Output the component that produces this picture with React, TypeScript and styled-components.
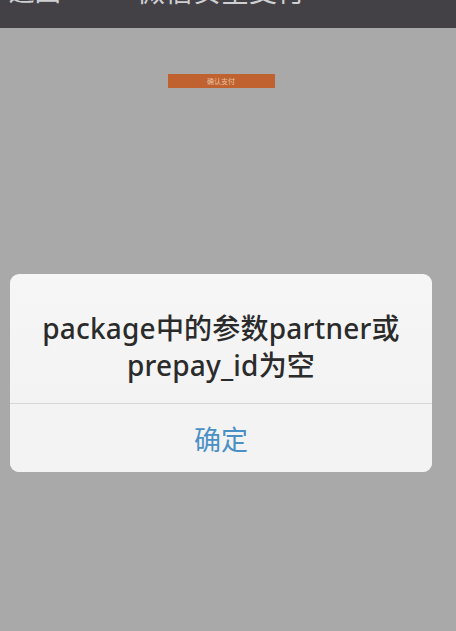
import styled, { createGlobalStyle } from "styled-components";

const GlobalStyle = createGlobalStyle`
  html, body {
    margin: 0;
    padding: 0;
    background: #a9a9a9;
  }
  body {
    font-family: "Noto Sans", "Noto Sans CJK SC", sans-serif;
  }
`;

const Screen = styled.div`
  width: 456px;
  height: 631px;
  overflow: hidden;
  background: #a9a9a9;
  display: flex;
  flex-direction: column;
`;

const NavBar = styled.div`
  height: 28px;
  flex-shrink: 0;
  background: #434146;
  display: flex;
  align-items: flex-start;
  overflow: hidden;
  color: #cfcfd2;
`;

const NavText = styled.span<{ $size: number }>`
  margin-top: -23px;
  font-size: ${({ $size }) => $size}px;
  line-height: 28px;
  white-space: nowrap;
`;

const Back = styled(NavText)`
  width: 143px;
  margin-left: -6px;
`;

const Content = styled.div`
  flex: 1;
  display: flex;
  flex-direction: column;
  align-items: center;
  padding: 46px 14px 0 0;
`;

const PayButton = styled.button`
  width: 107px;
  height: 14px;
  padding: 0;
  border: none;
  background: #c0622f;
  color: #e8c2a8;
  font-size: 7px;
  line-height: 14px;
  font-family: "Noto Sans CJK SC", sans-serif;
`;

const Alert = styled.div`
  margin-top: 186px;
  width: 422px;
  border-radius: 9px;
  background: linear-gradient(#f6f6f6, #f1f1f1);
  display: flex;
  flex-direction: column;
  overflow: hidden;
`;

const Message = styled.div`
  padding: 36px 10px 19px;
  text-align: center;
  font-family: "Noto Sans", "Noto Sans CJK SC", sans-serif;
  font-size: 28px;
  font-weight: 550;
  letter-spacing: 0.2px;
  line-height: 37px;
  color: #2b2b2b;
`;

const Confirm = styled.button`
  height: 69px;
  border: none;
  border-top: 1px solid #d6d6d6;
  background: #f3f3f3;
  color: #4b90c5;
  font-family: "Noto Sans CJK SC", sans-serif;
  font-size: 27px;
  padding: 0;
`;

export default function App() {
  return (
    <>
      <GlobalStyle />
      <Screen>
        <NavBar>
          <Back $size={26}>‹ 返回</Back>
          <NavText $size={28}>微信安全支付</NavText>
        </NavBar>
        <Content>
          <PayButton>确认支付</PayButton>
          <Alert>
            <Message>
              package中的参数partner或
              <br />
              prepay_id为空
            </Message>
            <Confirm>确定</Confirm>
          </Alert>
        </Content>
      </Screen>
    </>
  );
}
